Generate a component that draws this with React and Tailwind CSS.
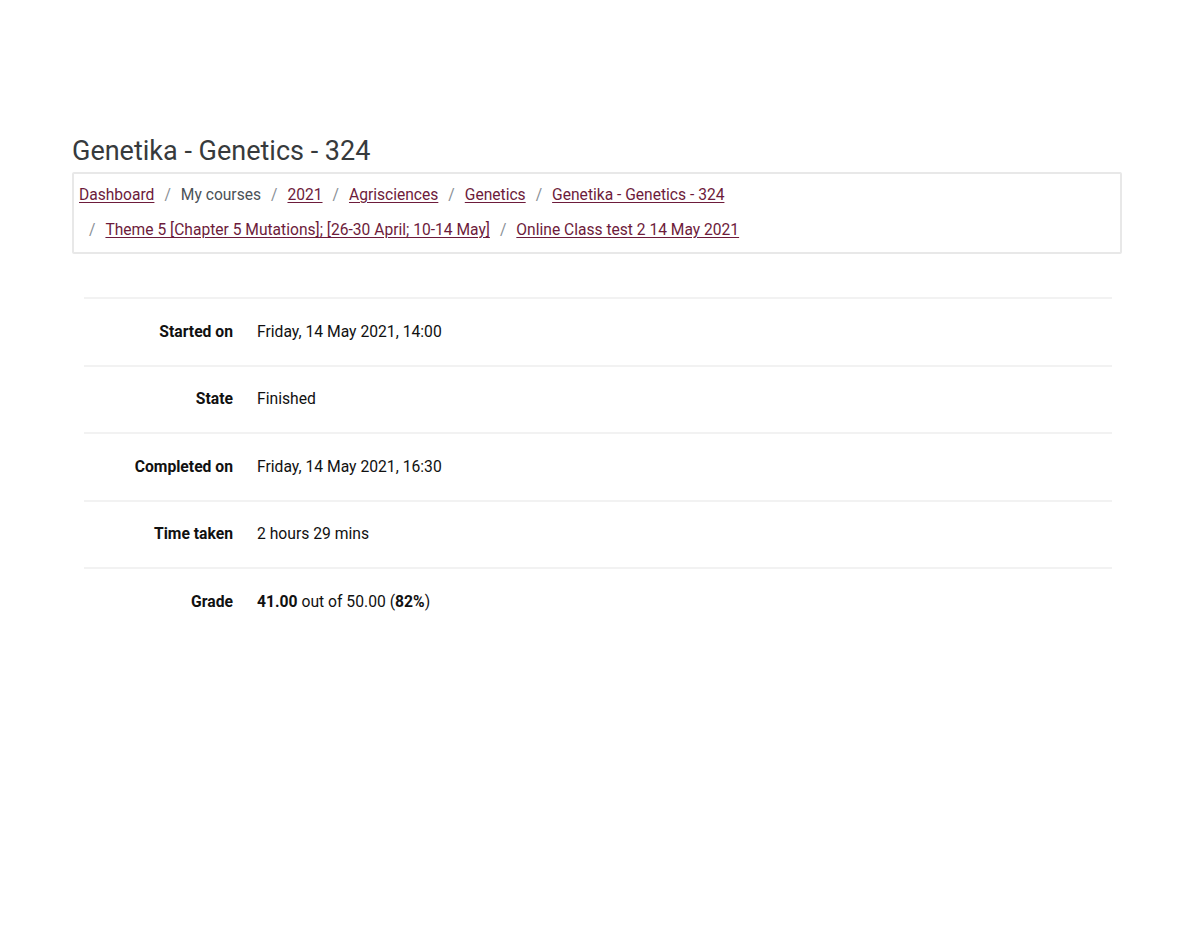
import React from "react";

const crumbs = [
  { t: "Dashboard", link: true },
  { t: "My courses", link: false },
  { t: "2021", link: true },
  { t: "Agrisciences", link: true },
  { t: "Genetics", link: true },
  { t: "Genetika - Genetics - 324", link: true },
  { t: "Theme 5 [Chapter 5 Mutations]; [26-30 April; 10-14 May]", link: true },
  { t: "Online Class test 2 14 May 2021", link: true },
];

const rows = [
  ["Started on", "Friday, 14 May 2021, 14:00"],
  ["State", "Finished"],
  ["Completed on", "Friday, 14 May 2021, 16:30"],
  ["Time taken", "2 hours 29 mins"],
  [
    "Grade",
    <span key="g">
      <b>41.00</b> out of 50.00 (<b>82%</b>)
    </span>,
  ],
];

export default function App() {
  return (
    <div
      className="w-[1200px] h-[927px] bg-white"
      style={{ fontFamily: "Roboto, 'Liberation Sans', sans-serif" }}
    >
      <div className="pt-[135px] px-[72px] w-[1194px]">
        <h1 className="text-[27px] leading-[32px] text-[#373a3c] font-normal mb-[5px]">
          Genetika - Genetics - 324
        </h1>
        <div className="border-2 border-[#e8e8e8] rounded-[2px] px-[5px] py-[4px]">
          <ol className="flex flex-wrap text-[15.6px] leading-[35px]">
            {crumbs.map((c, i) => (
              <li key={i} className="flex items-center">
                {i > 0 && (
                  <span className="text-[#8a9096] px-[10px]">/</span>
                )}
                {c.link ? (
                  <a className="text-[#6d1b3b] underline decoration-1 underline-offset-[2px]">
                    {c.t}
                  </a>
                ) : (
                  <span className="text-[#4b5258]">{c.t}</span>
                )}
              </li>
            ))}
          </ol>
        </div>
        <div className="mt-[43px] ml-[12px] mr-[10px]">
          {rows.map(([k, v], i) => (
            <div
              key={i}
              className="flex items-center h-[67.5px] border-t-2 border-[#f2f2f2] text-[15.7px] text-[#111]"
            >
              <div className="w-[161px] pr-[12px] text-right font-bold">{k}</div>
              <div className="pl-[12px]">{v}</div>
            </div>
          ))}
        </div>
      </div>
    </div>
  );
}
